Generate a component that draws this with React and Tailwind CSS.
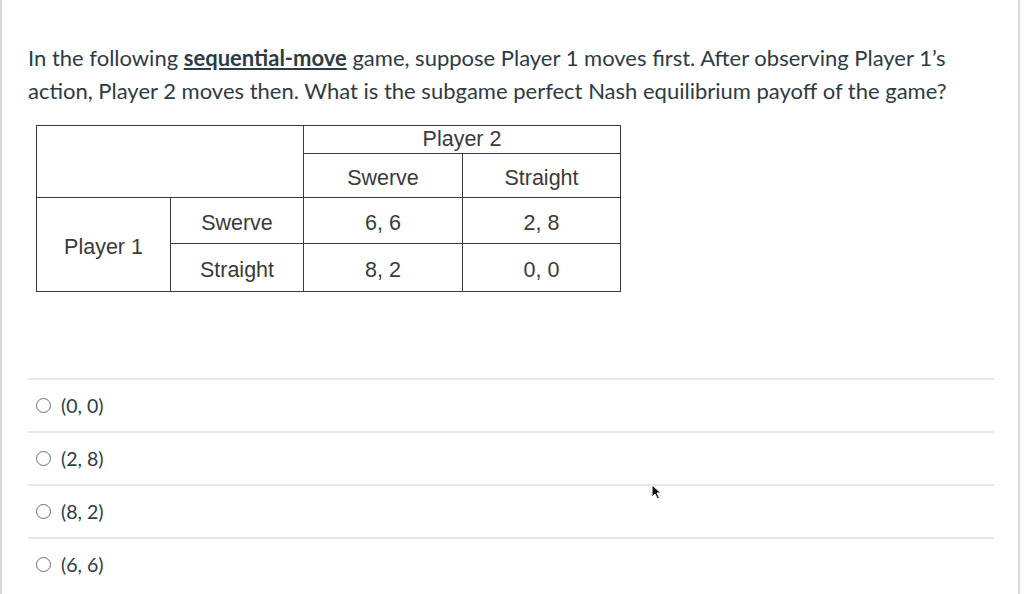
import React from "react";

const options = ["(0, 0)", "(2, 8)", "(8, 2)", "(6, 6)"];

const cell = "border border-[#3a3a3a] text-center text-[#3a3a3a] pt-[6px]";

export default function App() {
  return (
    <div className="relative w-[1024px] h-[594px] bg-white overflow-hidden font-['Lato','Noto_Sans',sans-serif]">
      <div className="h-full w-[1020px] border-l-2 border-r-2 border-[#d9d9d9]">
        <div className="pl-[26px] pr-[20px] pt-[41px]">
          <p className="text-[22px] leading-[33px] text-[#2d3b45] whitespace-nowrap">
            In the following <strong className="underline">sequential-move</strong> game, suppose Player 1 moves first. After observing Player 1’s
            <br />
            action, Player 2 moves then. What is the subgame perfect Nash equilibrium payoff of the game?
          </p>

          <table className="mt-[18px] ml-[8px] border-collapse border-[1.5px] border-[#3a3a3a] font-['Liberation_Sans',Arial,sans-serif] text-[21.5px]">
            <tbody>
              <tr className="h-[28px]">
                <td colSpan={2} rowSpan={2} className={cell}></td>
                <td colSpan={2} className="border border-[#3a3a3a] text-center text-[#3a3a3a] leading-none">Player 2</td>
              </tr>
              <tr className="h-[44px]">
                <td className={cell + " w-[159px]"}>Swerve</td>
                <td className={cell + " w-[158px]"}>Straight</td>
              </tr>
              <tr className="h-[46px]">
                <td rowSpan={2} className={cell + " w-[134px]"}>Player 1</td>
                <td className={cell + " w-[133px]"}>Swerve</td>
                <td className={cell}>6, 6</td>
                <td className={cell}>2, 8</td>
              </tr>
              <tr className="h-[48px]">
                <td className={cell}>Straight</td>
                <td className={cell}>8, 2</td>
                <td className={cell}>0, 0</td>
              </tr>
            </tbody>
          </table>

          <div className="mt-[86px] w-[966px]">
            {options.map((o) => (
              <div key={o} className="flex items-center gap-[10px] h-[53px] border-t-2 border-[#e6e6e6] pl-[8px]">
                <span className="w-[15px] h-[15px] rounded-full border-[1.5px] border-[#6e6e6e] bg-white" />
                <span className="text-[19.5px] text-[#2d3b45]">{o}</span>
              </div>
            ))}
          </div>
        </div>
      </div>

      <svg className="absolute left-[651px] top-[484px]" width="12" height="16" viewBox="0 0 12 16">
        <path d="M1 1 L1 13 L4 10 L6.5 15 L8.5 14 L6 9 L10 9 Z" fill="#111" stroke="#fff" strokeWidth="1" />
      </svg>
    </div>
  );
}
